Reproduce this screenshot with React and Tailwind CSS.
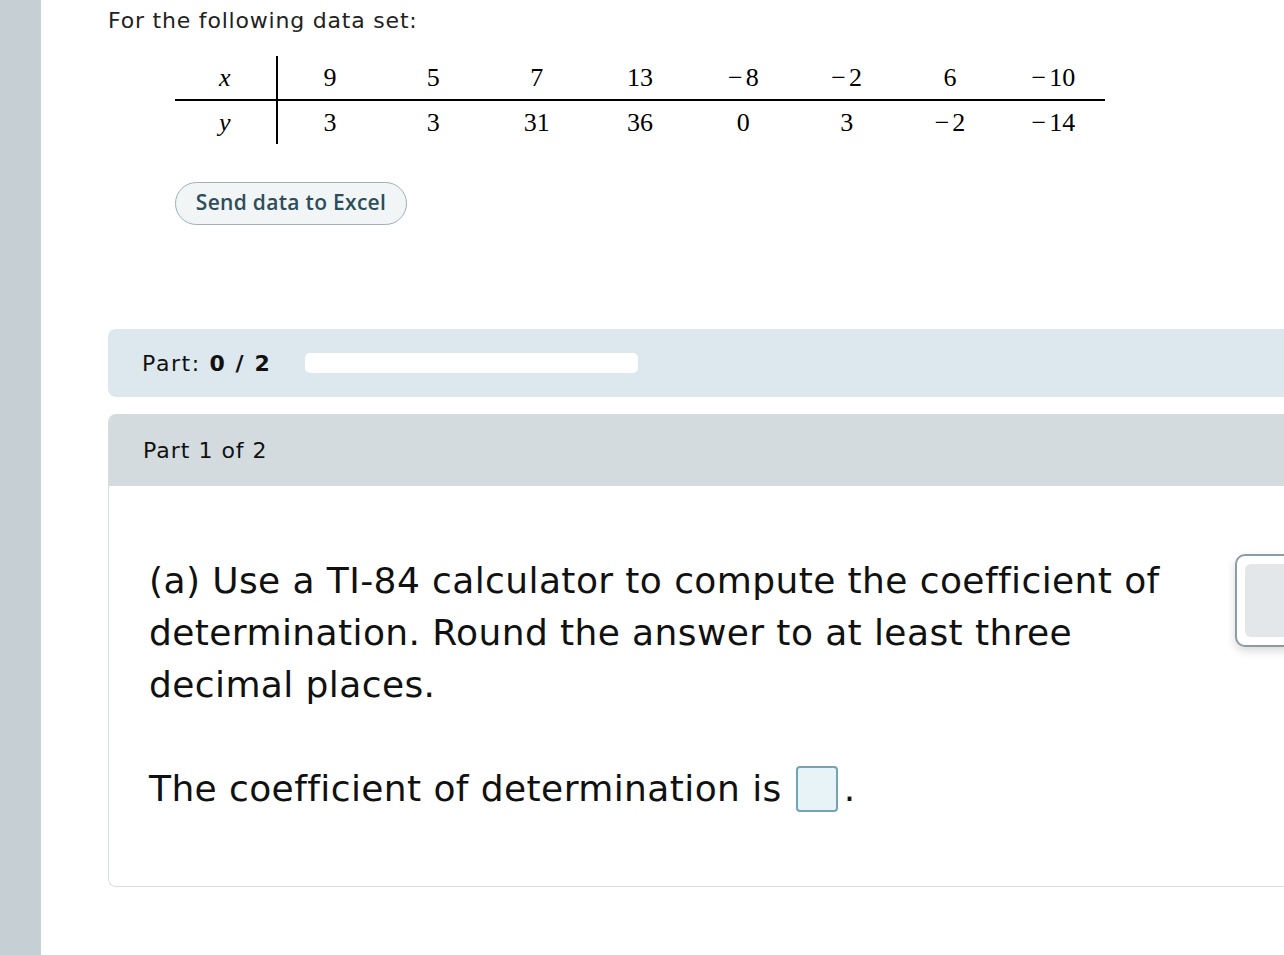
export default function App() {
  const xs = ["9", "5", "7", "13", "\u22128", "\u22122", "6", "\u221210"];
  const ys = ["3", "3", "31", "36", "0", "3", "\u22122", "\u221214"];
  const fmt = (v) => v.startsWith("\u2212") ? (<span>{"\u2212"}<span className="ml-[3px]">{v.slice(1)}</span></span>) : v;
  return (
    <div className="w-[1284px] h-[955px] overflow-hidden bg-white flex" style={{ fontFamily: '"DejaVu Sans", Verdana, sans-serif' }}>
      <div className="w-[41px] shrink-0 bg-[#c5cfd4]" />
      <div className="flex-1 pl-[67px] relative">
        <div className="pt-[7px] text-[22px] leading-[28px] tracking-[0.8px] text-[#222]">For the following data set:</div>
        <div className="ml-[67px] mt-[21px] w-[930px]" style={{ fontFamily: '"Liberation Serif", "Times New Roman", serif' }}>
          <div className="grid grid-cols-9 text-[26px] text-black border-b-2 border-black leading-[40px]">
            <div className="italic text-center border-r-2 border-black pt-[2px] pb-[1px] pr-[2px]">x</div>
            {xs.map((v, i) => <div key={i} className="text-center pt-[2px] pb-[1px]">{fmt(v)}</div>)}
          </div>
          <div className="grid grid-cols-9 text-[26px] text-black leading-[40px]">
            <div className="italic text-center border-r-2 border-black pt-[2px] pb-[1px] pr-[2px]">y</div>
            {ys.map((v, i) => <div key={i} className="text-center pt-[2px] pb-[1px]">{fmt(v)}</div>)}
          </div>
        </div>
        <div className="ml-[67px] mt-[38px]">
          <button className="h-[43px] w-[232px] rounded-full border border-[#9fb0b7] bg-[#f1f5f6] text-[#2e4d5a] text-[21px] tracking-[0.3px] font-semibold pb-[1px]" style={{ fontFamily: '"Open Sans", sans-serif' }}>Send data to Excel</button>
        </div>
        <div className="mt-[104px] h-[68px] bg-[#dde7ee] rounded-tl-[8px] rounded-bl-[8px] flex items-center pl-[34px] text-[22px] tracking-[1.6px] text-[#111]">
          <span>Part: <b>0 / 2</b></span>
          <div className="ml-[34px] w-[333px] h-[20px] bg-white rounded-[5px]" />
        </div>
        <div className="mt-[17px] rounded-tl-[8px] rounded-bl-[8px] border-l border-b border-[#d9dee1] overflow-hidden h-[473px]">
          <div className="h-[72px] bg-[#d3dbdf] flex items-center pl-[34px] text-[22px] tracking-[1px] text-[#111]">Part 1 of 2</div>
          <div className="relative pl-[40px] pt-[69px] text-[36px] leading-[52px] tracking-[0.4px] text-[#111]">
            <div className="w-[1050px]">(a) Use a TI-84 calculator to compute the coefficient of determination. Round the answer to at least three decimal places.</div>
            <div className="mt-[52px] flex items-center">
              <span>The coefficient of determination is</span>
              <span className="ml-[14px] inline-block w-[42px] h-[46px] rounded-[4px] border-2 border-[#74a4b4] bg-[#e8f3f7]" />
              <span className="ml-[6px]">.</span>
            </div>
          </div>
        </div>
        <div className="absolute left-[1194px] top-[554px] w-[120px] h-[93px] rounded-[10px] border-2 border-[#8c9ca3] bg-white p-[8px] shadow-[0_4px_10px_rgba(0,0,0,0.15)]">
          <div className="w-full h-full bg-[#e3e7ea] rounded-[6px]" />
        </div>
      </div>
    </div>
  );
}
